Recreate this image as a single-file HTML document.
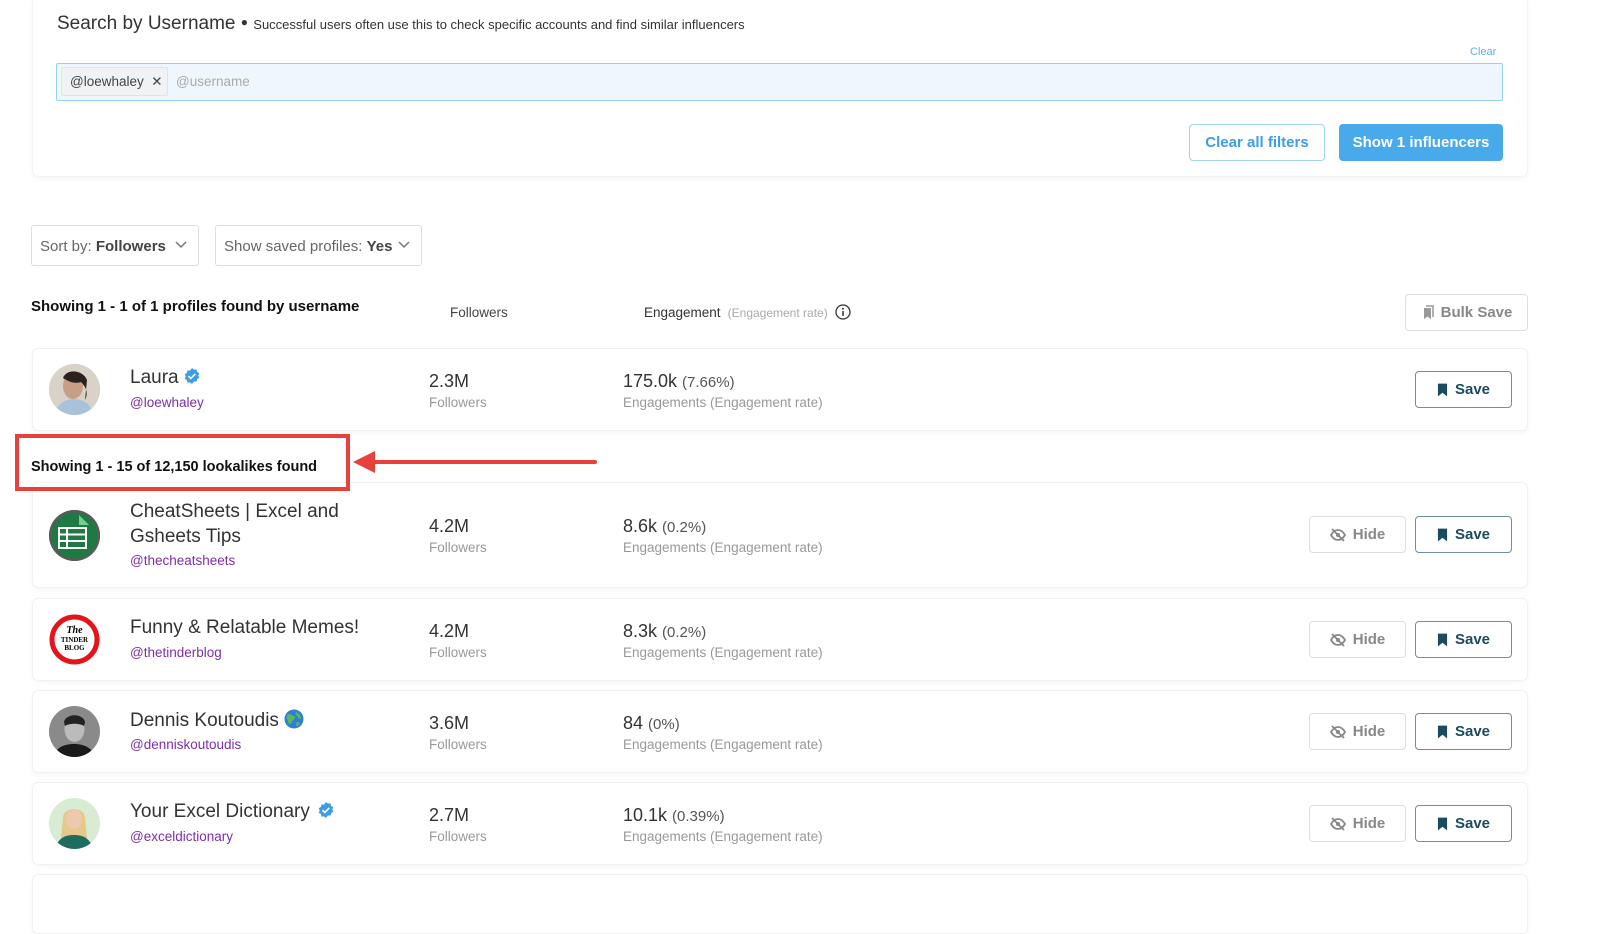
<!DOCTYPE html>
<html><head><meta charset="utf-8">
<style>
*{box-sizing:border-box;margin:0;padding:0}
body{width:1600px;height:898px;overflow:hidden;background:#fff;font-family:"Liberation Sans",sans-serif;color:#222;position:relative}
.a{position:absolute}
.card{position:absolute;left:32px;width:1496px;background:#fff;border:1px solid #f1f1f1;border-radius:6px;box-shadow:0 2px 6px rgba(0,0,0,0.04)}
.name{position:absolute;left:97px;font-size:19px;color:#333}
.handle{position:absolute;left:97px;font-size:13.5px;color:#7b2fa8}
.num{position:absolute;font-size:18px;color:#333}
.num span{font-size:15px;color:#555}
.lbl{position:absolute;font-size:13.5px;color:#999}
.btn{position:absolute;height:37px;border-radius:4px;font-size:15px;font-weight:bold;display:flex;align-items:center;justify-content:center;gap:7px}
.save{width:97px;border:1.5px solid #6d8fa0;color:#1b4b5f;left:1382px}
.hide{width:97px;border:1px solid #ddd;color:#888;left:1276px}
.av{position:absolute;left:16px;width:51px;height:51px;border-radius:50%;overflow:hidden}
</style></head><body>

<div class="card" style="top:-6px;height:183px;border-color:#f3f3f3">
</div>
<div class="a" style="left:57px;top:13px;font-size:19px;color:#333">Search by Username <span style="font-size:12px;position:relative;top:-3px">●</span>&nbsp;<span style="font-size:13px;color:#333">Successful users often use this to check specific accounts and find similar influencers</span></div>
<div class="a" style="left:1470px;top:46px;font-size:11px;color:#5ab0ec">Clear</div>
<div class="a" style="left:56px;top:63px;width:1447px;height:38px;background:#eef7fe;border:1.5px solid #9bd0f5;border-radius:2px"></div>
<div class="a" style="left:61px;top:67px;width:107px;height:29px;background:#f1f2f3;border:1px solid #e3e3e3;border-radius:2px;font-size:13.5px;color:#444;padding:6px 0 0 8px">@loewhaley&nbsp;&nbsp;✕</div>
<div class="a" style="left:176px;top:74px;font-size:13.5px;color:#aaa">@username</div>
<div class="btn" style="left:1189px;top:124px;width:136px;height:37px;border:1.5px solid #a3d3f5;color:#3d9de6;font-size:15px">Clear all filters</div>
<div class="btn" style="left:1339px;top:124px;width:164px;height:37px;background:#48a9eb;color:#fff;font-size:15px">Show 1 influencers</div>

<div class="a" style="left:31px;top:225px;width:168px;height:41px;border:1px solid #ddd;border-radius:3px;font-size:15px;color:#666;padding:12px 0 0 8px">Sort by: <b style="color:#444">Followers</b></div>
<svg class="a" style="left:175px;top:241px" width="12" height="8"><path d="M1 1l5 5 5-5" stroke="#777" stroke-width="1.5" fill="none"/></svg>
<div class="a" style="left:215px;top:225px;width:207px;height:41px;border:1px solid #ddd;border-radius:3px;font-size:15px;color:#666;padding:12px 0 0 8px">Show saved profiles: <b style="color:#444">Yes</b></div>
<svg class="a" style="left:398px;top:241px" width="12" height="8"><path d="M1 1l5 5 5-5" stroke="#777" stroke-width="1.5" fill="none"/></svg>

<div class="a" style="left:31px;top:298px;font-size:15px;font-weight:bold;color:#111">Showing 1 - 1 of 1 profiles found by username</div>
<div class="a" style="left:450px;top:305px;font-size:13.5px;color:#444">Followers</div>
<div class="a" style="left:644px;top:305px;font-size:13.5px;color:#333">Engagement <span style="font-size:12px;color:#aaa">&nbsp;(Engagement rate)</span></div>
<svg class="a" style="left:835px;top:304px" width="16" height="16"><circle cx="8" cy="8" r="7" stroke="#333" stroke-width="1.3" fill="none"/><circle cx="8" cy="4.8" r="1" fill="#333"/><path d="M8 7v5" stroke="#333" stroke-width="1.5"/></svg>
<div class="btn" style="left:1405px;top:294px;width:123px;height:37px;border:1px solid #ddd;color:#888"><svg width="13" height="15"><path d="M3 3h7v11l-3.5-2.5L3 14z" fill="#999"/><path d="M5 1h7v11" stroke="#999" stroke-width="1.5" fill="none"/></svg>Bulk Save</div>

<svg width="0" height="0" style="position:absolute"><defs>
<symbol id="bm" viewBox="0 0 12 14"><path d="M1 0h10v14l-5-4-5 4z" fill="#1b4b5f"/></symbol>
<symbol id="eye" viewBox="0 0 16 14"><path d="M1 7c2-3.5 4.5-5 7-5s5 1.5 7 5c-2 3.5-4.5 5-7 5s-5-1.5-7-5z" fill="none" stroke="#888" stroke-width="1.8"/><circle cx="8" cy="7" r="2" fill="#888"/><path d="M2 1l12 12" stroke="#888" stroke-width="1.8"/></symbol>
<symbol id="chk" viewBox="0 0 16 16"><path d="M8 0l2 1.6 2.5-.2.6 2.5 2.2 1.3-1 2.3 1 2.3-2.2 1.3-.6 2.5-2.5-.2L8 16l-2-1.6-2.5.2-.6-2.5L.7 10.8l1-2.3-1-2.3 2.2-1.3.6-2.5 2.5.2z" fill="#3d9de6"/><path d="M4.5 8.2l2.3 2.2 4.5-4.5" stroke="#fff" stroke-width="1.6" fill="none"/></symbol>
</defs></svg>

<!-- Row 1 -->
<div class="card" style="top:348px;height:83px">
<div class="av" style="top:15px;background:#c9b8a8"><svg width="51" height="51"><rect width="51" height="51" fill="#d8d2c8"/><ellipse cx="24" cy="22" rx="10" ry="13" fill="#c79f86"/><path d="M14 14c4-10 20-8 24 2l-2 20c4-8 0-14-4-18-6 2-12 0-18-4z" fill="#2b221d"/><path d="M5 51c3-12 12-16 20-16s17 4 20 16z" fill="#a9c2dc"/></svg></div>
<div class="name" style="top:18px">Laura <svg width="16" height="16" style="vertical-align:-1px"><use href="#chk"/></svg></div>
<div class="handle" style="top:46px">@loewhaley</div>
<div class="num" style="left:396px;top:22px">2.3M</div><div class="lbl" style="left:396px;top:46px">Followers</div>
<div class="num" style="left:590px;top:22px">175.0k <span>(7.66%)</span></div><div class="lbl" style="left:590px;top:46px">Engagements (Engagement rate)</div>
<div class="btn save" style="top:22px"><svg width="11" height="14"><use href="#bm"/></svg>Save</div>
</div>

<!-- Row 2 -->
<div class="card" style="top:482px;height:106px">
<div class="av" style="top:27px;background:#1f7a43"><svg width="51" height="51"><rect width="51" height="51" fill="#5a5a5a"/><circle cx="25.5" cy="25.5" r="23" fill="#1d7a42"/><path d="M30 5l10 10h-10z" fill="#6fcf8c"/><rect x="10" y="18" width="27" height="20" fill="none" stroke="#fff" stroke-width="2"/><path d="M10 24.5h27M10 31h27M18 18v20" stroke="#fff" stroke-width="2"/></svg></div>
<div class="name" style="top:16px;line-height:25px">CheatSheets | Excel and<br>Gsheets Tips</div>
<div class="handle" style="top:70px">@thecheatsheets</div>
<div class="num" style="left:396px;top:33px">4.2M</div><div class="lbl" style="left:396px;top:57px">Followers</div>
<div class="num" style="left:590px;top:33px">8.6k <span>(0.2%)</span></div><div class="lbl" style="left:590px;top:57px">Engagements (Engagement rate)</div>
<div class="btn hide" style="top:33px"><svg width="16" height="14"><use href="#eye"/></svg>Hide</div>
<div class="btn save" style="top:33px"><svg width="11" height="14"><use href="#bm"/></svg>Save</div>
</div>

<!-- Row 3 -->
<div class="card" style="top:598px;height:83px">
<div class="av" style="top:15px;background:#fff"><svg width="51" height="51"><circle cx="25.5" cy="25.5" r="22.5" fill="#fff" stroke="#e4141b" stroke-width="5"/><text x="25.5" y="19" font-family="Liberation Serif" font-style="italic" font-weight="bold" font-size="10" text-anchor="middle">The</text><text x="25.5" y="28" font-family="Liberation Serif" font-weight="bold" font-size="7" text-anchor="middle">TINDER</text><text x="25.5" y="36" font-family="Liberation Serif" font-weight="bold" font-size="7" text-anchor="middle">BLOG</text></svg></div>
<div class="name" style="top:18px">Funny &amp; Relatable Memes!</div>
<div class="handle" style="top:46px">@thetinderblog</div>
<div class="num" style="left:396px;top:22px">4.2M</div><div class="lbl" style="left:396px;top:46px">Followers</div>
<div class="num" style="left:590px;top:22px">8.3k <span>(0.2%)</span></div><div class="lbl" style="left:590px;top:46px">Engagements (Engagement rate)</div>
<div class="btn hide" style="top:22px"><svg width="16" height="14"><use href="#eye"/></svg>Hide</div>
<div class="btn save" style="top:22px"><svg width="11" height="14"><use href="#bm"/></svg>Save</div>
</div>

<!-- Row 4 -->
<div class="card" style="top:690px;height:83px">
<div class="av" style="top:15px"><svg width="51" height="51"><rect width="51" height="51" fill="#8a8a8a"/><ellipse cx="25.5" cy="23" rx="10" ry="13" fill="#bbb"/><path d="M15 16c2-9 19-9 21 0l-1 4c-4-3-15-3-19 0z" fill="#222"/><path d="M4 51c3-10 12-13 21-13s18 3 21 13z" fill="#1a1a1a"/></svg></div>
<div class="name" style="top:18px">Dennis Koutoudis <svg width="20" height="20" style="vertical-align:-3px"><circle cx="10" cy="10" r="9.5" fill="#2f7fd6"/><path d="M4 5c3 0 4 2 6 2s1 3-1 4-1 4-3 4-2-4-3-5 0-3 1-5zM12 3c2 1 5 3 5 7-2 0-3-2-4-3s-2-2-1-4zM13 13c2 0 3 1 2 3-1 1-3 1-3 0s0-2 1-3z" fill="#5cb85c"/></svg></div>
<div class="handle" style="top:46px">@denniskoutoudis</div>
<div class="num" style="left:396px;top:22px">3.6M</div><div class="lbl" style="left:396px;top:46px">Followers</div>
<div class="num" style="left:590px;top:22px">84 <span>(0%)</span></div><div class="lbl" style="left:590px;top:46px">Engagements (Engagement rate)</div>
<div class="btn hide" style="top:22px"><svg width="16" height="14"><use href="#eye"/></svg>Hide</div>
<div class="btn save" style="top:22px"><svg width="11" height="14"><use href="#bm"/></svg>Save</div>
</div>

<!-- Row 5 -->
<div class="card" style="top:782px;height:83px">
<div class="av" style="top:15px"><svg width="51" height="51"><rect width="51" height="51" fill="#d7ecd3"/><path d="M14 20c0-12 22-12 22 0l2 20H12z" fill="#e6c98a"/><ellipse cx="25" cy="21" rx="8" ry="10" fill="#efc9ad"/><path d="M6 51c3-11 10-14 19-14s16 3 19 14z" fill="#1f6b5e"/></svg></div>
<div class="name" style="top:18px">Your Excel Dictionary <svg width="16" height="16" style="vertical-align:-1px;margin-left:3px"><use href="#chk"/></svg></div>
<div class="handle" style="top:46px">@exceldictionary</div>
<div class="num" style="left:396px;top:22px">2.7M</div><div class="lbl" style="left:396px;top:46px">Followers</div>
<div class="num" style="left:590px;top:22px">10.1k <span>(0.39%)</span></div><div class="lbl" style="left:590px;top:46px">Engagements (Engagement rate)</div>
<div class="btn hide" style="top:22px"><svg width="16" height="14"><use href="#eye"/></svg>Hide</div>
<div class="btn save" style="top:22px"><svg width="11" height="14"><use href="#bm"/></svg>Save</div>
</div>

<div class="card" style="top:874px;height:60px"></div>

<!-- Red annotation (on top) -->
<div class="a" style="left:15px;top:434px;width:335px;height:57px;border:4px solid #e8403b;z-index:5"></div>
<div class="a" style="left:31px;top:459px;font-size:14.5px;font-weight:bold;color:#111;z-index:5">Showing 1 - 15 of 12,150 lookalikes found</div>
<svg class="a" style="left:350px;top:448px;z-index:5" width="250" height="28"><path d="M22 14H245" stroke="#e8403b" stroke-width="4" stroke-linecap="round"/><path d="M3 14L25 3v22z" fill="#e8403b"/></svg>
</body></html>
